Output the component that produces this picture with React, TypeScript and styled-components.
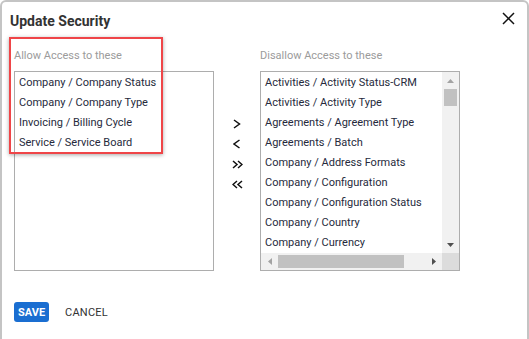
import styled, { createGlobalStyle } from "styled-components";

const GlobalStyle = createGlobalStyle`
    html, body {
        margin: 0;
        padding: 0;
        background: #ffffff;
        font-family: Roboto, "Liberation Sans", sans-serif;
    }
`;

const Dialog = styled.div`
    position: relative;
    box-sizing: border-box;
    width: 529px;
    height: 345px;
    border: 2px solid #c4c4c4;
    border-radius: 6px;
    background: #ffffff;
    overflow: hidden;
`;

const Header = styled.div`
    display: flex;
    justify-content: space-between;
    align-items: flex-start;
    padding: 9px 12px 0 8px;
`;

const Title = styled.h2`
    margin: 0;
    font-size: 14px;
    line-height: 20px;
    font-weight: 700;
    color: #333333;
`;

const CloseButton = styled.button`
    border: none;
    background: none;
    padding: 0;
    width: 14px;
    height: 14px;
    display: flex;
    align-items: center;
    justify-content: center;
    cursor: pointer;
`;

const Body = styled.div`
    display: grid;
    grid-template-columns: 200px 46px 200px;
    padding: 16px 0 0 12px;
`;

const Column = styled.div`
    display: flex;
    flex-direction: column;
`;

const Label = styled.div`
    font-size: 11px;
    line-height: 14px;
    color: #9b9b9b;
    padding-top: 2px;
    margin-bottom: 8px;
`;

const ListBox = styled.div<{ $scroll?: boolean }>`
    box-sizing: border-box;
    width: 200px;
    height: 200px;
    border: 1px solid #adadad;
    display: grid;
    grid-template-columns: ${(p) => (p.$scroll ? "1fr 17px" : "1fr")};
    grid-template-rows: ${(p) => (p.$scroll ? "1fr 17px" : "1fr")};
    background: #ffffff;
`;

const Items = styled.ul`
    margin: 0;
    padding: 1px 0 0;
    list-style: none;
    overflow: hidden;
`;

const Item = styled.li`
    padding-left: 4px;
    height: 20px;
    font-size: 11px;
    line-height: 20px;
    color: #262a3c;
    white-space: nowrap;
`;

const VBar = styled.div`
    background: #f1f1f1;
    display: flex;
    flex-direction: column;
`;

const HBar = styled.div`
    background: #f1f1f1;
    display: flex;
`;

const ScrollCorner = styled.div`
    background: #dcdcdc;
`;

const ScrollButton = styled.div`
    width: 17px;
    height: 17px;
    flex: none;
    display: flex;
    align-items: center;
    justify-content: center;
`;

const VThumb = styled.div`
    margin: 0 2px;
    height: 17px;
    background: #c1c1c1;
`;

const Track = styled.div`
    flex: 1;
`;

const HThumb = styled.div`
    margin: 2px 0;
    width: 126px;
    background: #c1c1c1;
`;

const MoveColumn = styled.div`
    display: flex;
    flex-direction: column;
    align-items: center;
    padding-top: 67px;
`;

const MoveButton = styled.button`
    border: none;
    background: none;
    padding: 0;
    width: 20px;
    height: 20px;
    display: flex;
    align-items: center;
    justify-content: center;
    cursor: pointer;
`;

const Footer = styled.div`
    display: flex;
    align-items: center;
    gap: 16px;
    padding: 31px 0 0 12px;
`;

const SaveButton = styled.button`
    border: none;
    border-radius: 3px;
    background: #1a6ed1;
    color: #ffffff;
    font-family: Roboto, "Liberation Sans", sans-serif;
    font-size: 11px;
    font-weight: 700;
    height: 20px;
    padding: 0 4px;
    cursor: pointer;
`;

const CancelButton = styled.button`
    border: none;
    background: none;
    color: #333333;
    font-family: Roboto, "Liberation Sans", sans-serif;
    font-size: 11px;
    padding: 0;
    letter-spacing: 0.2px;
    cursor: pointer;
`;

const Highlight = styled.div`
    position: absolute;
    left: 7px;
    top: 35px;
    width: 154px;
    height: 117px;
    box-sizing: border-box;
    border: 2px solid #ef4548;
    box-shadow: 0 1px 4px rgba(0, 0, 0, 0.35);
    pointer-events: none;
`;

const allowed = [
    "Company / Company Status",
    "Company / Company Type",
    "Invoicing / Billing Cycle",
    "Service / Service Board",
];

const disallowed = [
    "Activities / Activity Status-CRM",
    "Activities / Activity Type",
    "Agreements / Agreement Type",
    "Agreements / Batch",
    "Company / Address Formats",
    "Company / Configuration",
    "Company / Configuration Status",
    "Company / Country",
    "Company / Currency",
];

function Triangle({ dir, dark }: { dir: "up" | "down" | "left" | "right"; dark?: boolean }) {
    const pts = {
        up: "0,4 7,4 3.5,0",
        down: "0,0 7,0 3.5,4",
        left: "4,0 4,7 0,3.5",
        right: "0,0 0,7 4,3.5",
    }[dir];
    const vertical = dir === "up" || dir === "down";
    return (
        <svg width={vertical ? 7 : 4} height={vertical ? 4 : 7}>
            <polygon points={pts} fill={dark ? "#505050" : "#a3a3a3"} />
        </svg>
    );
}

function Chevron({ dir, double }: { dir: "left" | "right"; double?: boolean }) {
    const single = dir === "right" ? "1,1 6.5,5 1,9" : "6.5,1 1,5 6.5,9";
    if (!double) {
        return (
            <svg width="8" height="10">
                <polyline points={single} fill="none" stroke="#111" strokeWidth="1.5" />
            </svg>
        );
    }
    const a = dir === "right" ? "1,1 5,4.5 1,8" : "5,1 1,4.5 5,8";
    const b = dir === "right" ? "6,1 10,4.5 6,8" : "10,1 6,4.5 10,8";
    return (
        <svg width="11" height="9">
            <polyline points={a} fill="none" stroke="#111" strokeWidth="1.5" />
            <polyline points={b} fill="none" stroke="#111" strokeWidth="1.5" />
        </svg>
    );
}

export default function App() {
    return (
        <>
            <GlobalStyle />
            <Dialog>
                <Header>
                    <Title>Update Security</Title>
                    <CloseButton aria-label="close">
                        <svg width="13" height="13">
                            <path d="M1 1 L12 12 M12 1 L1 12" stroke="#111" strokeWidth="1.5" />
                        </svg>
                    </CloseButton>
                </Header>

                <Body>
                    <Column>
                        <Label>Allow Access to these</Label>
                        <ListBox>
                            <Items>
                                {allowed.map((item) => (
                                    <Item key={item}>{item}</Item>
                                ))}
                            </Items>
                        </ListBox>
                    </Column>

                    <MoveColumn>
                        <MoveButton aria-label="move right">
                            <Chevron dir="right" />
                        </MoveButton>
                        <MoveButton aria-label="move left">
                            <Chevron dir="left" />
                        </MoveButton>
                        <MoveButton aria-label="move all right">
                            <Chevron dir="right" double />
                        </MoveButton>
                        <MoveButton aria-label="move all left">
                            <Chevron dir="left" double />
                        </MoveButton>
                    </MoveColumn>

                    <Column>
                        <Label>Disallow Access to these</Label>
                        <ListBox $scroll>
                            <Items>
                                {disallowed.map((item) => (
                                    <Item key={item}>{item}</Item>
                                ))}
                            </Items>
                            <VBar>
                                <ScrollButton>
                                    <Triangle dir="up" />
                                </ScrollButton>
                                <VThumb />
                                <Track />
                                <ScrollButton>
                                    <Triangle dir="down" dark />
                                </ScrollButton>
                            </VBar>
                            <HBar>
                                <ScrollButton>
                                    <Triangle dir="left" />
                                </ScrollButton>
                                <HThumb />
                                <Track />
                                <ScrollButton>
                                    <Triangle dir="right" dark />
                                </ScrollButton>
                            </HBar>
                            <ScrollCorner />
                        </ListBox>
                    </Column>
                </Body>

                <Footer>
                    <SaveButton>SAVE</SaveButton>
                    <CancelButton>CANCEL</CancelButton>
                </Footer>

                <Highlight />
            </Dialog>
        </>
    );
}
